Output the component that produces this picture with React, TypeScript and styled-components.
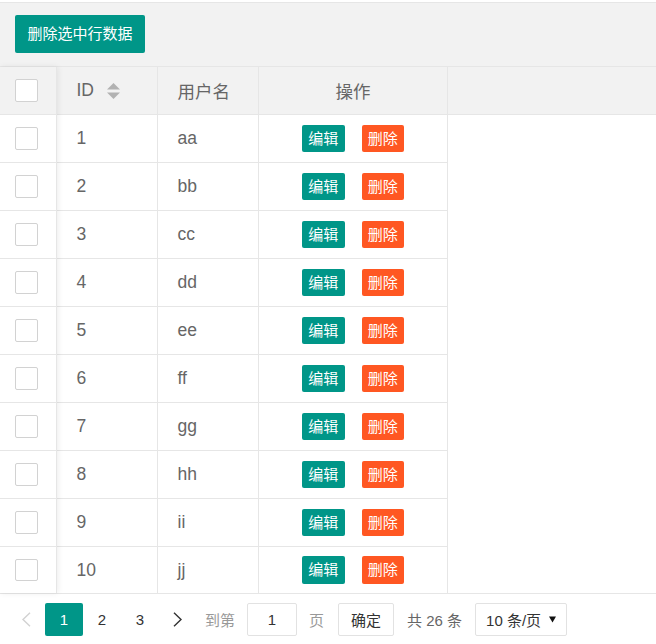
import React from "react";
import styled, { createGlobalStyle } from "styled-components";

const GlobalStyle = createGlobalStyle`
  html, body {
    margin: 0;
    padding: 0;
    background: #fff;
  }
  body {
    font-family: "Liberation Sans", Arial, "Noto Sans CJK SC", sans-serif;
    color: #666;
  }
  * { box-sizing: border-box; }
`;

const FONT = `"Liberation Sans", Arial, "Noto Sans CJK SC", sans-serif`;

const View = styled.div`
  margin-top: 2px;
  border-top: 1px solid #e6e6e6;
  width: 656px;
  overflow: hidden;
`;

const Toolbar = styled.div`
  height: 64px;
  padding: 12px 15px 0;
  background: #f2f2f2;
  border-bottom: 1px solid #e6e6e6;
`;

const PrimaryButton = styled.button`
  height: 38px;
  padding: 0 12.5px;
  border: none;
  border-radius: 2px;
  background: #009688;
  color: #fff;
  font-family: ${FONT};
  font-size: 15px;
  line-height: 38px;
  cursor: pointer;
`;

const TableArea = styled.div`
  display: flex;
  align-items: stretch;
  border-bottom: 1px solid #e6e6e6;
`;

const FixedCol = styled.div`
  position: relative;
  z-index: 2;
  width: 57px;
  flex: none;
  background: #fff;
  border-right: 1px solid #e6e6e6;
  box-shadow: 1px 0 6px rgba(0, 0, 0, 0.08);
`;

const CheckCell = styled.div<{ $head?: boolean }>`
  height: 48px;
  display: flex;
  align-items: center;
  padding-left: 15px;
  background: ${(p) => (p.$head ? "#f2f2f2" : "#fff")};
  border-bottom: 1px solid #e6e6e6;
  &:last-child {
    height: 46px;
    border-bottom: none;
  }
`;

const CheckBox = styled.span`
  display: block;
  width: 22.5px;
  height: 22.5px;
  border: 1px solid #d2d2d2;
  border-radius: 2px;
  background: #fff;
`;

const Main = styled.div`
  flex: 1;
  min-width: 0;
`;

const HeadRow = styled.div`
  display: flex;
  height: 48px;
  background: #f2f2f2;
  border-bottom: 1px solid #e6e6e6;
`;

const Body = styled.div`
  width: 391px;
`;

const Row = styled.div`
  display: flex;
  height: 48px;
  border-bottom: 1px solid #e6e6e6;
  &:last-child {
    height: 46px;
    border-bottom: none;
  }
`;

const Cell = styled.div<{ $w: number; $center?: boolean }>`
  width: ${(p) => p.$w}px;
  flex: none;
  display: flex;
  align-items: center;
  justify-content: ${(p) => (p.$center ? "center" : "flex-start")};
  gap: ${(p) => (p.$center ? 17 : 0)}px;
  padding: 0 ${(p) => (p.$center ? 0 : 19.5)}px;
  border-right: 1px solid #e6e6e6;
  font-size: 17.5px;
  color: #666;
  white-space: nowrap;
`;

const SortIcon = styled.svg`
  margin-left: 13px;
  width: 13px;
  height: 16px;
  display: block;
`;

const SmallButton = styled.button<{ $danger?: boolean }>`
  height: 27.5px;
  padding: 0 6.25px;
  border: none;
  border-radius: 2px;
  background: ${(p) => (p.$danger ? "#FF5722" : "#009688")};
  color: #fff;
  font-family: ${FONT};
  font-size: 15px;
  line-height: 27.5px;
`;

const Pager = styled.div`
  display: flex;
  align-items: flex-start;
  height: 50px;
  padding: 9px 0 0 7px;
  font-size: 15px;
`;

const PageLink = styled.span<{ $active?: boolean }>`
  display: flex;
  align-items: center;
  justify-content: center;
  width: 38px;
  height: 33px;
  border-radius: 2px;
  background: ${(p) => (p.$active ? "#009688" : "transparent")};
  color: ${(p) => (p.$active ? "#fff" : "#333")};
`;

const Chevron = styled.svg`
  width: 10px;
  height: 15px;
  display: block;
`;

const Label = styled.span<{ $color: string; $ml: number }>`
  display: flex;
  align-items: center;
  height: 33px;
  margin-left: ${(p) => p.$ml}px;
  color: ${(p) => p.$color};
  white-space: nowrap;
`;

const Box = styled.span<{ $w: number; $ml: number; $pad?: number }>`
  display: flex;
  align-items: center;
  justify-content: ${(p) => (p.$pad !== undefined ? "space-between" : "center")};
  width: ${(p) => p.$w}px;
  height: 33px;
  margin-left: ${(p) => p.$ml}px;
  padding: 0 ${(p) => p.$pad ?? 0}px;
  border: 1px solid #e2e2e2;
  border-radius: 2px;
  background: #fff;
  color: #333;
  white-space: nowrap;
`;

const Caret = styled.svg`
  width: 7px;
  height: 7px;
  display: block;
`;

const HeadFill = styled.div`
  flex: 1;
`;

const rows = [
  [1, "aa"],
  [2, "bb"],
  [3, "cc"],
  [4, "dd"],
  [5, "ee"],
  [6, "ff"],
  [7, "gg"],
  [8, "hh"],
  [9, "ii"],
  [10, "jj"],
] as const;

export default function App() {
  return (
    <>
      <GlobalStyle />
      <View>
        <Toolbar>
          <PrimaryButton>删除选中行数据</PrimaryButton>
        </Toolbar>
        <TableArea>
          <FixedCol>
            <CheckCell $head>
              <CheckBox />
            </CheckCell>
            {rows.map(([id]) => (
              <CheckCell key={id}>
                <CheckBox />
              </CheckCell>
            ))}
          </FixedCol>
          <Main>
            <HeadRow>
              <Cell $w={101}>
                ID
                <SortIcon viewBox="0 0 13 16">
                  <polygon points="0,6.5 6.5,0 13,6.5" fill="#b2b2b2" />
                  <polygon points="0,9.5 13,9.5 6.5,16" fill="#b2b2b2" />
                </SortIcon>
              </Cell>
              <Cell $w={101}>用户名</Cell>
              <Cell $w={189} $center>
                操作
              </Cell>
              <HeadFill />
            </HeadRow>
            <Body>
              {rows.map(([id, name]) => (
                <Row key={id}>
                  <Cell $w={101}>{id}</Cell>
                  <Cell $w={101}>{name}</Cell>
                  <Cell $w={189} $center>
                    <SmallButton>编辑</SmallButton>
                    <SmallButton $danger>删除</SmallButton>
                  </Cell>
                </Row>
              ))}
            </Body>
          </Main>
        </TableArea>
        <Pager>
          <PageLink>
            <Chevron viewBox="0 0 10 15">
              <polyline points="9,0.7 2,7.5 9,14.3" fill="none" stroke="#d2d2d2" strokeWidth="1.4" />
            </Chevron>
          </PageLink>
          <PageLink $active>1</PageLink>
          <PageLink>2</PageLink>
          <PageLink>3</PageLink>
          <PageLink>
            <Chevron viewBox="0 0 10 15">
              <polyline points="1,0.7 8,7.5 1,14.3" fill="none" stroke="#333" strokeWidth="1.4" />
            </Chevron>
          </PageLink>
          <Label $color="#999" $ml={8}>到第</Label>
          <Box $w={50} $ml={12}>1</Box>
          <Label $color="#999" $ml={12}>页</Label>
          <Box $w={56} $ml={14}>确定</Box>
          <Label $color="#666" $ml={13}>共 26 条</Label>
          <Box $w={92} $ml={13} $pad={10}>
            10 条/页
            <Caret viewBox="0 0 7 7">
              <polygon points="0,0.5 7,0.5 3.5,6.5" fill="#111" />
            </Caret>
          </Box>
        </Pager>
      </View>
    </>
  );
}
